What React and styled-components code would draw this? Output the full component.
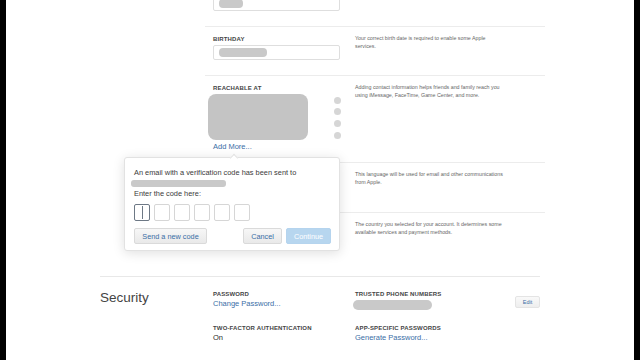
import React from "react";
import styled, { createGlobalStyle } from "styled-components";

const GlobalStyle = createGlobalStyle`
  html, body {
    margin: 0;
    padding: 0;
    background: #000;
  }
  body {
    font-family: "Liberation Sans", Arial, sans-serif;
    color: #333;
  }
`;

const Page = styled.div`
  margin: 0 6px;
  height: 360px;
  background: #fff;
  overflow: hidden;
  padding-left: 94px;
  box-sizing: border-box;
`;

const Upper = styled.section`
  display: grid;
  grid-template-columns: 105px 340px;
  margin-top: -23px;
  padding-bottom: 14px;
`;

const Rows = styled.div`
  grid-column: 2;
  display: flex;
  flex-direction: column;
`;

const Row = styled.div`
  display: grid;
  grid-template-columns: 142px 1fr;
  height: ${(p) => p.h}px;
  padding: 8px 0 0 8px;
  box-sizing: border-box;
  border-top: 1px solid #ececec;
`;

const Field = styled.div`
  display: flex;
  flex-direction: column;
  align-items: flex-start;
`;

const Label = styled.div`
  font-size: 6px;
  line-height: 9px;
  height: 9px;
  font-weight: 700;
  color: #444;
  letter-spacing: 0.15px;
  text-transform: uppercase;
`;

const Input = styled.div`
  width: 127px;
  height: 15px;
  margin-top: 1px;
  border: 1px solid #dedede;
  border-radius: 2px;
  box-sizing: border-box;
  padding: 2px 5px;
`;

const Blur = styled.div`
  width: ${(p) => p.w}px;
  height: ${(p) => p.h}px;
  background: #c9c9c9;
  border-radius: ${(p) => p.r ?? 4}px;
`;

const Desc = styled.p`
  margin: 0;
  font-size: 5.3px;
  line-height: 7.5px;
  color: #666;
`;

const Reach = styled.div`
  display: flex;
  align-items: flex-start;
  margin: 1px 0 0 -5px;
`;

const ReachBox = styled.div`
  width: 100px;
  height: 46px;
  background: #c4c4c4;
  border-radius: 8px;
`;

const Dots = styled.div`
  display: flex;
  flex-direction: column;
  gap: 4.7px;
  margin: 2.5px 0 0 26px;
`;

const Dot = styled.span`
  width: 7px;
  height: 7px;
  border-radius: 50%;
  background: #d6d6d6;
`;

const LinkText = styled.a`
  display: block;
  font-size: ${(p) => p.size ?? 7.5}px;
  line-height: ${(p) => p.lh ?? 10}px;
  color: #3a6ea6;
  text-decoration: none;
  cursor: pointer;
`;

const AddMoreWrap = styled.div`
  position: relative;
  margin-top: 2px;
`;

const Popup = styled.div`
  position: absolute;
  top: 15px;
  left: -89px;
  width: 216px;
  z-index: 2;
  background: #fff;
  border: 1px solid #e2e2e2;
  border-radius: 3px;
  box-shadow: 0 2px 12px rgba(0, 0, 0, 0.13);
  box-sizing: border-box;
  padding: 10px 8px 6px 9px;

  &::before {
    content: "";
    position: absolute;
    top: -3px;
    left: 106px;
    width: 5px;
    height: 5px;
    background: #fff;
    border-top: 1px solid #e2e2e2;
    border-left: 1px solid #e2e2e2;
    transform: rotate(45deg);
  }
`;

const PopText = styled.div`
  font-size: 7.4px;
  line-height: 10px;
  color: #3a3a3a;
  margin-top: ${(p) => p.mt ?? 0}px;
`;

const EmailBlur = styled(Blur)`
  margin: 2px 0 0 -3px;
`;

const CodeRow = styled.div`
  display: flex;
  gap: 4px;
  margin-top: 5px;
`;

const CodeBox = styled.div`
  position: relative;
  width: 16px;
  height: 17px;
  box-sizing: border-box;
  border: 1px solid ${(p) => (p.active ? "#6d7885" : "#d6d6d6")};
  border-radius: 2px;

  &::after {
    content: "";
    display: ${(p) => (p.active ? "block" : "none")};
    position: absolute;
    top: 1px;
    bottom: 1px;
    left: 7px;
    width: 1px;
    background: #6d7885;
  }
`;

const Actions = styled.div`
  display: flex;
  align-items: center;
  gap: 4px;
  margin-top: 7px;
`;

const Btn = styled.button`
  height: 16px;
  padding: 0;
  width: ${(p) => p.w}px;
  margin-left: ${(p) => (p.push ? "auto" : "0")};
  font-family: inherit;
  font-size: 7.3px;
  border-radius: 2px;
  border: 1px solid ${(p) => (p.primary ? "#b5d4ee" : "#dadada")};
  background: ${(p) =>
    p.primary ? "#b7d6ef" : "linear-gradient(#f7f7f7, #e9e9e9)"};
  color: ${(p) => (p.primary ? "#fff" : "#3a6ea6")};
`;

const Security = styled.section`
  display: grid;
  grid-template-columns: 113px 142px 160px 25px;
  width: 440px;
  border-top: 1px solid #e8e8e8;
  padding-top: 13px;
  box-sizing: border-box;
`;

const Heading = styled.h2`
  margin: 0;
  font-size: 13.5px;
  line-height: 16px;
  font-weight: 400;
  color: #444;
`;

const Col = styled.div`
  display: flex;
  flex-direction: column;
  gap: 14px;
`;

const Item = styled.div`
  display: flex;
  flex-direction: column;
  align-items: flex-start;
`;

const SecLabel = styled(Label)`
  line-height: 8px;
  height: 8px;
`;

const Value = styled.div`
  font-size: 7.5px;
  line-height: 12px;
  color: #2a2a2a;
`;

const PhoneBlur = styled(Blur)`
  margin: 2px 0 0 -2px;
`;

const EditBtn = styled.button`
  width: 25px;
  height: 12px;
  margin-top: -1px;
  padding: 0;
  font-family: inherit;
  font-size: 5.5px;
  color: #3a6ea6;
  border: 1px solid #e4e4e4;
  border-radius: 2px;
  background: linear-gradient(#f9f9f9, #eeeeee);
`;

const App = () => {
  return (
    <Page>
      <GlobalStyle />
      <Upper>
        <Rows>
          <Row h={49}>
            <Field>
              <Label />
              <Input>
                <Blur w={24} h={9} />
              </Input>
            </Field>
          </Row>
          <Row h={49}>
            <Field>
              <Label>Birthday</Label>
              <Input>
                <Blur w={48} h={9} />
              </Input>
            </Field>
            <Desc>
              Your correct birth date is required to enable some Apple
              <br />
              services.
            </Desc>
          </Row>
          <Row h={87}>
            <Field>
              <Label>Reachable At</Label>
              <Reach>
                <ReachBox />
                <Dots>
                  <Dot />
                  <Dot />
                  <Dot />
                  <Dot />
                </Dots>
              </Reach>
              <AddMoreWrap>
                <LinkText>Add More...</LinkText>
                <Popup>
                  <PopText>
                    An email with a verification code has been sent to
                  </PopText>
                  <EmailBlur w={95} h={7} r={3} />
                  <PopText mt={2}>Enter the code here:</PopText>
                  <CodeRow>
                    <CodeBox active />
                    <CodeBox />
                    <CodeBox />
                    <CodeBox />
                    <CodeBox />
                    <CodeBox />
                  </CodeRow>
                  <Actions>
                    <Btn w={73}>Send a new code</Btn>
                    <Btn w={39} push>
                      Cancel
                    </Btn>
                    <Btn w={45} primary>
                      Continue
                    </Btn>
                  </Actions>
                </Popup>
              </AddMoreWrap>
            </Field>
            <Desc>
              Adding contact information helps friends and family reach you
              <br />
              using iMessage, FaceTime, Game Center, and more.
            </Desc>
          </Row>
          <Row h={50}>
            <Field />
            <Desc>
              This language will be used for email and other communications
              <br />
              from Apple.
            </Desc>
          </Row>
          <Row h={50}>
            <Field />
            <Desc>
              The country you selected for your account. It determines some
              <br />
              available services and payment methods.
            </Desc>
          </Row>
        </Rows>
      </Upper>
      <Security>
        <Heading>Security</Heading>
        <Col>
          <Item>
            <SecLabel>Password</SecLabel>
            <LinkText size={7.5} lh={12}>
              Change Password...
            </LinkText>
          </Item>
          <Item>
            <SecLabel>Two-Factor Authentication</SecLabel>
            <Value>On</Value>
          </Item>
        </Col>
        <Col>
          <Item>
            <SecLabel>Trusted Phone Numbers</SecLabel>
            <PhoneBlur w={79} h={10} r={5} />
          </Item>
          <Item>
            <SecLabel>App-Specific Passwords</SecLabel>
            <LinkText size={7.5} lh={12}>
              Generate Password...
            </LinkText>
          </Item>
        </Col>
        <div>
          <EditBtn>Edit</EditBtn>
        </div>
      </Security>
    </Page>
  );
};

export default App;
